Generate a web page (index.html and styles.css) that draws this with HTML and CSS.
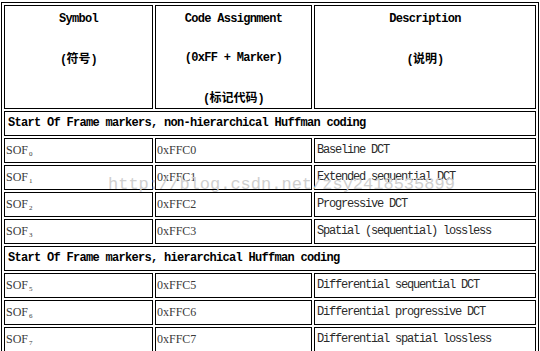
FILE: index.html
```html
<!DOCTYPE html>
<html>
<head>
<meta charset="utf-8">
<link rel="stylesheet" href="styles.css">
</head>
<body>
<div class="page">
<table class="markers">
  <tr class="head">
    <td class="c1"><div class="stack"><span>Symbol</span><span>(<span class="cjk">符号</span>)</span></div></td>
    <td class="c2"><div class="stack"><span>Code Assignment</span><span>(0xFF + Marker)</span><span>(<span class="cjk">标记代码</span>)</span></div></td>
    <td class="c3"><div class="stack"><span>Description</span><span>(<span class="cjk">说明</span>)</span></div></td>
  </tr>
  <tr><td class="section" colspan="3">Start Of Frame markers, non-hierarchical Huffman coding</td></tr>
  <tr><td class="sym">SOF<sub>0</sub></td><td class="code">0xFFC0</td><td class="desc">Baseline DCT</td></tr>
  <tr><td class="sym">SOF<sub>1</sub></td><td class="code">0xFFC1</td><td class="desc">Extended sequential DCT</td></tr>
  <tr><td class="sym">SOF<sub>2</sub></td><td class="code">0xFFC2</td><td class="desc">Progressive DCT</td></tr>
  <tr><td class="sym">SOF<sub>3</sub></td><td class="code">0xFFC3</td><td class="desc">Spatial (sequential) lossless</td></tr>
  <tr><td class="section" colspan="3">Start Of Frame markers, hierarchical Huffman coding</td></tr>
  <tr><td class="sym">SOF<sub>5</sub></td><td class="code">0xFFC5</td><td class="desc">Differential sequential DCT</td></tr>
  <tr><td class="sym">SOF<sub>6</sub></td><td class="code">0xFFC6</td><td class="desc">Differential progressive DCT</td></tr>
  <tr><td class="sym">SOF<sub>7</sub></td><td class="code">0xFFC7</td><td class="desc">Differential spatial lossless</td></tr>
</table>
<div class="watermark">http://blog.csdn.net/zsy2418535899</div>
</div>
</body>
</html>
```

FILE: styles.css
```css
html, body {
  margin: 0;
  padding: 0;
  background: #fff;
}

.page {
  position: relative;
  width: 540px;
  height: 351px;
  overflow: hidden;
}

.markers {
  margin: 2px 0 0 1px;
  width: 538px;
  table-layout: fixed;
  border-collapse: separate;
  border-spacing: 2px;
  border: 1px solid #000;
}

.markers td {
  border: 1px solid #000;
  padding: 4px 1px;
  height: 25px;
  box-sizing: border-box;
  line-height: 15px;
  vertical-align: middle;
  white-space: nowrap;
}

.head td {
  vertical-align: top;
  text-align: center;
  padding: 1px;
  height: 104px;
  font-family: "Liberation Mono", "Noto Sans CJK SC", monospace;
  font-weight: bold;
  font-size: 12px;
  letter-spacing: -0.7px;
  color: #000;
}

.head .c1 { width: 149px; }
.head .c2 { width: 157px; }
.head .c3 { width: 222px; }

.stack {
  display: flex;
  flex-direction: column;
  align-items: center;
  gap: 19px;
  padding-top: 2px;
}

.stack > span {
  line-height: 20px;
  height: 20px;
}

.cjk {
  font-family: "Noto Sans CJK SC", sans-serif;
  font-size: 12px;
  letter-spacing: 0;
}

.markers td.section {
  font-family: "Liberation Mono", monospace;
  font-weight: bold;
  font-size: 12px;
  letter-spacing: -0.7px;
  color: #000;
  padding-left: 3px;
}

.markers td.sym,
.markers td.code {
  font-family: "Liberation Serif", serif;
  font-size: 12px;
  color: #3a3a3a;
}

.markers td.desc {
  font-family: "Liberation Mono", monospace;
  font-size: 12px;
  letter-spacing: -1.2px;
  color: #2a2a2a;
  padding-left: 2px;
}

sub {
  font-size: 7px;
  line-height: 0;
  vertical-align: -2px;
  margin-left: 1px;
}

.watermark {
  position: absolute;
  left: 108px;
  top: 176px;
  font-family: "Liberation Mono", monospace;
  font-size: 17px;
  line-height: 17px;
  color: #cfcfcf;
  pointer-events: none;
  white-space: nowrap;
}
```
